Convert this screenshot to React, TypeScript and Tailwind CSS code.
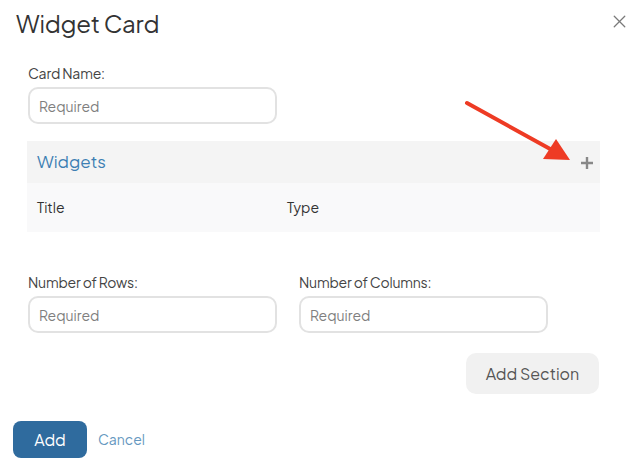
import { X } from 'lucide-react';

const font = { fontFamily: '"Plus Jakarta Sans", Inter, "Noto Sans", sans-serif' };

function Field({ label, className = '' }: { label: string; className?: string }) {
  return (
    <div className={className}>
      <div className="text-[14px] leading-[18px] text-[#444] tracking-[-0.2px]">{label}</div>
      <input
        placeholder="Required"
        className="mt-[5px] h-[37px] w-[249px] rounded-[10px] border-2 border-[#e2e2e2] bg-white px-[9px] text-[14px] text-[#333] placeholder-[#7f7f7f] outline-none"
      />
    </div>
  );
}

export default function App() {
  return (
    <div className="relative h-[473px] w-[642px] bg-white" style={font}>
      {/* Header */}
      <div className="flex items-start justify-between pl-[16px] pr-[12px] pt-[8px]">
        <h1 className="text-[24px] leading-[30px] text-[#333] tracking-[-0.2px]">Widget Card</h1>
        <button className="mt-[3px] text-[#7a7a7a]">
          <X className="h-[21px] w-[21px]" strokeWidth={1.5} />
        </button>
      </div>

      <div className="px-[27px]">
        <Field label="Card Name:" className="mt-[26px] pl-[1px]" />

        {/* Widgets table */}
        <div className="mt-[17px] w-[573px]">
          <div className="flex h-[42px] items-center justify-between bg-[#f4f4f4] pl-[10px] pr-[6px]">
            <span className="text-[17px] text-[#3d7fb3]">Widgets</span>
            <svg width="14" height="14" viewBox="0 0 14 14" className="mt-[2px]">
              <path d="M7 1v12M1 7h12" stroke="#888" strokeWidth="2.4" />
            </svg>
          </div>
          <div className="flex h-[49px] items-center bg-[#f9f9fa] pl-[10px] text-[14px] text-[#333]">
            <span className="w-[250px]">Title</span>
            <span>Type</span>
          </div>
        </div>

        {/* Rows / Columns */}
        <div className="mt-[41px] flex gap-[22px] pl-[1px]">
          <Field label="Number of Rows:" />
          <Field label="Number of Columns:" />
        </div>

        <div className="mt-[20px] flex w-[572px] justify-end">
          <button className="h-[41px] w-[133px] rounded-[10px] bg-[#f1f1f1] text-[16px] text-[#555]">
            Add Section
          </button>
        </div>
      </div>

      {/* Footer */}
      <div className="mt-[27px] flex items-center gap-[11px] pl-[13px]">
        <button className="h-[37px] w-[74px] rounded-[8px] bg-[#2f6b9e] text-[16px] text-white">Add</button>
        <span className="text-[14px] text-[#6598c0]">Cancel</span>
      </div>

      {/* Annotation arrow */}
      <svg className="pointer-events-none absolute left-0 top-0" width="642" height="473">
        <line x1="467" y1="103" x2="552" y2="150" stroke="#ee3b24" strokeWidth="4" strokeLinecap="round" />
        <polygon points="570,160 543,159 556,139" fill="#ee3b24" />
      </svg>
    </div>
  );
}
